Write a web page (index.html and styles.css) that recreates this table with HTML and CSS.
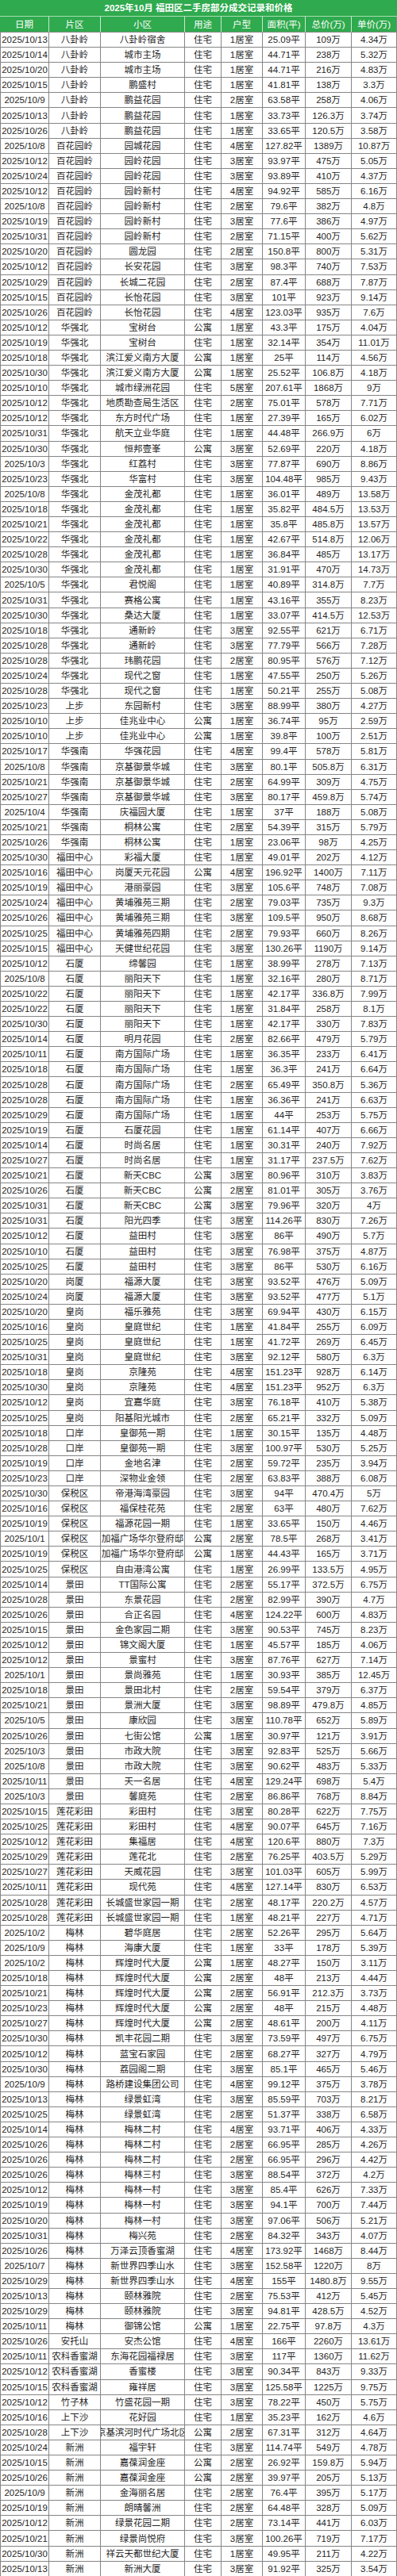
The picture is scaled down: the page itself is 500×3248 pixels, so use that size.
FILE: index.html
```html
<!DOCTYPE html>
<html lang="zh-CN">
<head>
<meta charset="utf-8">
<title>2025年10月 福田区二手房部分成交记录和价格</title>
<link rel="stylesheet" href="styles.css">
</head>
<body>
<table class="sheet">
<colgroup>
<col class="c-date"><col class="c-area"><col class="c-estate"><col class="c-use"><col class="c-type"><col class="c-size"><col class="c-total"><col class="c-unit">
</colgroup>
<thead>
<tr class="title"><th colspan="8">2025年10月 福田区二手房部分成交记录和价格</th></tr>
<tr class="head"><th>日期</th><th>片区</th><th>小区</th><th>用途</th><th>户型</th><th>面积(平)</th><th>总价(万)</th><th>单价(万)</th></tr>
</thead>
<tbody>
<tr><td>2025/10/13</td><td>八卦岭</td><td>八卦岭宿舍</td><td>住宅</td><td>1居室</td><td>25.09平</td><td>109万</td><td>4.34万</td></tr>
<tr><td>2025/10/14</td><td>八卦岭</td><td>城市主场</td><td>住宅</td><td>1居室</td><td>44.71平</td><td>238万</td><td>5.32万</td></tr>
<tr><td>2025/10/20</td><td>八卦岭</td><td>城市主场</td><td>住宅</td><td>1居室</td><td>44.71平</td><td>216万</td><td>4.83万</td></tr>
<tr><td>2025/10/15</td><td>八卦岭</td><td>鹏盛村</td><td>住宅</td><td>1居室</td><td>41.81平</td><td>138万</td><td>3.3万</td></tr>
<tr><td>2025/10/9</td><td>八卦岭</td><td>鹏益花园</td><td>住宅</td><td>2居室</td><td>63.58平</td><td>258万</td><td>4.06万</td></tr>
<tr><td>2025/10/13</td><td>八卦岭</td><td>鹏益花园</td><td>住宅</td><td>1居室</td><td>33.73平</td><td>126.3万</td><td>3.74万</td></tr>
<tr><td>2025/10/26</td><td>八卦岭</td><td>鹏益花园</td><td>住宅</td><td>1居室</td><td>33.65平</td><td>120.5万</td><td>3.58万</td></tr>
<tr><td>2025/10/8</td><td>百花园岭</td><td>园城花园</td><td>住宅</td><td>4居室</td><td>127.82平</td><td>1389万</td><td>10.87万</td></tr>
<tr><td>2025/10/12</td><td>百花园岭</td><td>园岭花园</td><td>住宅</td><td>3居室</td><td>93.97平</td><td>475万</td><td>5.05万</td></tr>
<tr><td>2025/10/24</td><td>百花园岭</td><td>园岭花园</td><td>住宅</td><td>3居室</td><td>93.89平</td><td>410万</td><td>4.37万</td></tr>
<tr><td>2025/10/12</td><td>百花园岭</td><td>园岭新村</td><td>住宅</td><td>4居室</td><td>94.92平</td><td>585万</td><td>6.16万</td></tr>
<tr><td>2025/10/8</td><td>百花园岭</td><td>园岭新村</td><td>住宅</td><td>2居室</td><td>79.6平</td><td>382万</td><td>4.8万</td></tr>
<tr><td>2025/10/19</td><td>百花园岭</td><td>园岭新村</td><td>住宅</td><td>3居室</td><td>77.6平</td><td>386万</td><td>4.97万</td></tr>
<tr><td>2025/10/31</td><td>百花园岭</td><td>园岭新村</td><td>住宅</td><td>2居室</td><td>71.15平</td><td>400万</td><td>5.62万</td></tr>
<tr><td>2025/10/20</td><td>百花园岭</td><td>圆龙园</td><td>住宅</td><td>2居室</td><td>150.8平</td><td>800万</td><td>5.31万</td></tr>
<tr><td>2025/10/12</td><td>百花园岭</td><td>长安花园</td><td>住宅</td><td>3居室</td><td>98.3平</td><td>740万</td><td>7.53万</td></tr>
<tr><td>2025/10/29</td><td>百花园岭</td><td>长城二花园</td><td>住宅</td><td>2居室</td><td>87.4平</td><td>688万</td><td>7.87万</td></tr>
<tr><td>2025/10/15</td><td>百花园岭</td><td>长怡花园</td><td>住宅</td><td>3居室</td><td>101平</td><td>923万</td><td>9.14万</td></tr>
<tr><td>2025/10/26</td><td>百花园岭</td><td>长怡花园</td><td>住宅</td><td>4居室</td><td>123.03平</td><td>935万</td><td>7.6万</td></tr>
<tr><td>2025/10/12</td><td>华强北</td><td>宝树台</td><td>公寓</td><td>1居室</td><td>43.3平</td><td>175万</td><td>4.04万</td></tr>
<tr><td>2025/10/19</td><td>华强北</td><td>宝树台</td><td>住宅</td><td>1居室</td><td>32.14平</td><td>354万</td><td>11.01万</td></tr>
<tr><td>2025/10/18</td><td>华强北</td><td>滨江爱义南方大厦</td><td>公寓</td><td>1居室</td><td>25平</td><td>114万</td><td>4.56万</td></tr>
<tr><td>2025/10/30</td><td>华强北</td><td>滨江爱义南方大厦</td><td>公寓</td><td>1居室</td><td>25.52平</td><td>106.8万</td><td>4.18万</td></tr>
<tr><td>2025/10/10</td><td>华强北</td><td>城市绿洲花园</td><td>住宅</td><td>5居室</td><td>207.61平</td><td>1868万</td><td>9万</td></tr>
<tr><td>2025/10/12</td><td>华强北</td><td>地质勘查局生活区</td><td>住宅</td><td>2居室</td><td>75.01平</td><td>578万</td><td>7.71万</td></tr>
<tr><td>2025/10/12</td><td>华强北</td><td>东方时代广场</td><td>住宅</td><td>1居室</td><td>27.39平</td><td>165万</td><td>6.02万</td></tr>
<tr><td>2025/10/31</td><td>华强北</td><td>航天立业华庭</td><td>住宅</td><td>1居室</td><td>44.48平</td><td>266.9万</td><td>6万</td></tr>
<tr><td>2025/10/30</td><td>华强北</td><td>恒邦壹峯</td><td>公寓</td><td>3居室</td><td>52.69平</td><td>220万</td><td>4.18万</td></tr>
<tr><td>2025/10/3</td><td>华强北</td><td>红荔村</td><td>住宅</td><td>3居室</td><td>77.87平</td><td>690万</td><td>8.86万</td></tr>
<tr><td>2025/10/23</td><td>华强北</td><td>华富村</td><td>住宅</td><td>3居室</td><td>104.48平</td><td>985万</td><td>9.43万</td></tr>
<tr><td>2025/10/8</td><td>华强北</td><td>金茂礼都</td><td>住宅</td><td>1居室</td><td>36.01平</td><td>489万</td><td>13.58万</td></tr>
<tr><td>2025/10/18</td><td>华强北</td><td>金茂礼都</td><td>住宅</td><td>1居室</td><td>35.82平</td><td>484.5万</td><td>13.53万</td></tr>
<tr><td>2025/10/21</td><td>华强北</td><td>金茂礼都</td><td>住宅</td><td>1居室</td><td>35.8平</td><td>485.8万</td><td>13.57万</td></tr>
<tr><td>2025/10/22</td><td>华强北</td><td>金茂礼都</td><td>住宅</td><td>1居室</td><td>42.67平</td><td>514.8万</td><td>12.06万</td></tr>
<tr><td>2025/10/28</td><td>华强北</td><td>金茂礼都</td><td>住宅</td><td>1居室</td><td>36.84平</td><td>485万</td><td>13.17万</td></tr>
<tr><td>2025/10/30</td><td>华强北</td><td>金茂礼都</td><td>住宅</td><td>1居室</td><td>31.91平</td><td>470万</td><td>14.73万</td></tr>
<tr><td>2025/10/5</td><td>华强北</td><td>君悦阁</td><td>住宅</td><td>1居室</td><td>40.89平</td><td>314.8万</td><td>7.7万</td></tr>
<tr><td>2025/10/31</td><td>华强北</td><td>赛格公寓</td><td>住宅</td><td>1居室</td><td>43.16平</td><td>355万</td><td>8.23万</td></tr>
<tr><td>2025/10/30</td><td>华强北</td><td>桑达大厦</td><td>住宅</td><td>1居室</td><td>33.07平</td><td>414.5万</td><td>12.53万</td></tr>
<tr><td>2025/10/18</td><td>华强北</td><td>通新岭</td><td>住宅</td><td>3居室</td><td>92.55平</td><td>621万</td><td>6.71万</td></tr>
<tr><td>2025/10/28</td><td>华强北</td><td>通新岭</td><td>住宅</td><td>3居室</td><td>77.79平</td><td>566万</td><td>7.28万</td></tr>
<tr><td>2025/10/28</td><td>华强北</td><td>玮鹏花园</td><td>住宅</td><td>2居室</td><td>80.95平</td><td>576万</td><td>7.12万</td></tr>
<tr><td>2025/10/24</td><td>华强北</td><td>现代之窗</td><td>住宅</td><td>1居室</td><td>47.55平</td><td>250万</td><td>5.26万</td></tr>
<tr><td>2025/10/28</td><td>华强北</td><td>现代之窗</td><td>住宅</td><td>1居室</td><td>50.21平</td><td>255万</td><td>5.08万</td></tr>
<tr><td>2025/10/23</td><td>上步</td><td>东园新村</td><td>住宅</td><td>3居室</td><td>88.99平</td><td>380万</td><td>4.27万</td></tr>
<tr><td>2025/10/10</td><td>上步</td><td>佳兆业中心</td><td>公寓</td><td>1居室</td><td>36.74平</td><td>95万</td><td>2.59万</td></tr>
<tr><td>2025/10/10</td><td>上步</td><td>佳兆业中心</td><td>公寓</td><td>1居室</td><td>39.8平</td><td>100万</td><td>2.51万</td></tr>
<tr><td>2025/10/17</td><td>华强南</td><td>华强花园</td><td>住宅</td><td>4居室</td><td>99.4平</td><td>578万</td><td>5.81万</td></tr>
<tr><td>2025/10/8</td><td>华强南</td><td>京基御景华城</td><td>住宅</td><td>3居室</td><td>80.1平</td><td>505.8万</td><td>6.31万</td></tr>
<tr><td>2025/10/21</td><td>华强南</td><td>京基御景华城</td><td>住宅</td><td>2居室</td><td>64.99平</td><td>309万</td><td>4.75万</td></tr>
<tr><td>2025/10/27</td><td>华强南</td><td>京基御景华城</td><td>住宅</td><td>3居室</td><td>80.17平</td><td>459.8万</td><td>5.74万</td></tr>
<tr><td>2025/10/4</td><td>华强南</td><td>庆福园大厦</td><td>住宅</td><td>1居室</td><td>37平</td><td>188万</td><td>5.08万</td></tr>
<tr><td>2025/10/21</td><td>华强南</td><td>桐林公寓</td><td>住宅</td><td>2居室</td><td>54.39平</td><td>315万</td><td>5.79万</td></tr>
<tr><td>2025/10/26</td><td>华强南</td><td>桐林公寓</td><td>住宅</td><td>1居室</td><td>23.06平</td><td>98万</td><td>4.25万</td></tr>
<tr><td>2025/10/30</td><td>福田中心</td><td>彩福大厦</td><td>住宅</td><td>1居室</td><td>49.01平</td><td>202万</td><td>4.12万</td></tr>
<tr><td>2025/10/16</td><td>福田中心</td><td>岗厦天元花园</td><td>公寓</td><td>4居室</td><td>196.92平</td><td>1400万</td><td>7.11万</td></tr>
<tr><td>2025/10/19</td><td>福田中心</td><td>港丽豪园</td><td>住宅</td><td>3居室</td><td>105.6平</td><td>748万</td><td>7.08万</td></tr>
<tr><td>2025/10/24</td><td>福田中心</td><td>黄埔雅苑三期</td><td>住宅</td><td>2居室</td><td>79.03平</td><td>735万</td><td>9.3万</td></tr>
<tr><td>2025/10/26</td><td>福田中心</td><td>黄埔雅苑三期</td><td>住宅</td><td>3居室</td><td>109.5平</td><td>950万</td><td>8.68万</td></tr>
<tr><td>2025/10/25</td><td>福田中心</td><td>黄埔雅苑四期</td><td>住宅</td><td>2居室</td><td>79.93平</td><td>660万</td><td>8.26万</td></tr>
<tr><td>2025/10/15</td><td>福田中心</td><td>天健世纪花园</td><td>住宅</td><td>3居室</td><td>130.26平</td><td>1190万</td><td>9.14万</td></tr>
<tr><td>2025/10/12</td><td>石厦</td><td>缔馨园</td><td>住宅</td><td>1居室</td><td>38.99平</td><td>278万</td><td>7.13万</td></tr>
<tr><td>2025/10/8</td><td>石厦</td><td>丽阳天下</td><td>住宅</td><td>1居室</td><td>32.16平</td><td>280万</td><td>8.71万</td></tr>
<tr><td>2025/10/22</td><td>石厦</td><td>丽阳天下</td><td>住宅</td><td>1居室</td><td>42.17平</td><td>336.8万</td><td>7.99万</td></tr>
<tr><td>2025/10/22</td><td>石厦</td><td>丽阳天下</td><td>住宅</td><td>1居室</td><td>31.84平</td><td>258万</td><td>8.1万</td></tr>
<tr><td>2025/10/30</td><td>石厦</td><td>丽阳天下</td><td>住宅</td><td>1居室</td><td>42.17平</td><td>330万</td><td>7.83万</td></tr>
<tr><td>2025/10/14</td><td>石厦</td><td>明月花园</td><td>住宅</td><td>2居室</td><td>82.66平</td><td>479万</td><td>5.79万</td></tr>
<tr><td>2025/10/11</td><td>石厦</td><td>南方国际广场</td><td>住宅</td><td>1居室</td><td>36.35平</td><td>233万</td><td>6.41万</td></tr>
<tr><td>2025/10/18</td><td>石厦</td><td>南方国际广场</td><td>住宅</td><td>1居室</td><td>36.3平</td><td>241万</td><td>6.64万</td></tr>
<tr><td>2025/10/28</td><td>石厦</td><td>南方国际广场</td><td>住宅</td><td>2居室</td><td>65.49平</td><td>350.8万</td><td>5.36万</td></tr>
<tr><td>2025/10/28</td><td>石厦</td><td>南方国际广场</td><td>住宅</td><td>1居室</td><td>36.36平</td><td>241万</td><td>6.63万</td></tr>
<tr><td>2025/10/29</td><td>石厦</td><td>南方国际广场</td><td>住宅</td><td>1居室</td><td>44平</td><td>253万</td><td>5.75万</td></tr>
<tr><td>2025/10/19</td><td>石厦</td><td>石厦花园</td><td>住宅</td><td>1居室</td><td>61.14平</td><td>407万</td><td>6.66万</td></tr>
<tr><td>2025/10/14</td><td>石厦</td><td>时尚名居</td><td>住宅</td><td>1居室</td><td>30.31平</td><td>240万</td><td>7.92万</td></tr>
<tr><td>2025/10/27</td><td>石厦</td><td>时尚名居</td><td>住宅</td><td>1居室</td><td>31.17平</td><td>237.5万</td><td>7.62万</td></tr>
<tr><td>2025/10/21</td><td>石厦</td><td>新天CBC</td><td>公寓</td><td>3居室</td><td>80.96平</td><td>310万</td><td>3.83万</td></tr>
<tr><td>2025/10/26</td><td>石厦</td><td>新天CBC</td><td>公寓</td><td>2居室</td><td>81.01平</td><td>305万</td><td>3.76万</td></tr>
<tr><td>2025/10/31</td><td>石厦</td><td>新天CBC</td><td>公寓</td><td>3居室</td><td>79.96平</td><td>320万</td><td>4万</td></tr>
<tr><td>2025/10/31</td><td>石厦</td><td>阳光四季</td><td>住宅</td><td>3居室</td><td>114.26平</td><td>830万</td><td>7.26万</td></tr>
<tr><td>2025/10/12</td><td>石厦</td><td>益田村</td><td>住宅</td><td>3居室</td><td>86平</td><td>490万</td><td>5.7万</td></tr>
<tr><td>2025/10/10</td><td>石厦</td><td>益田村</td><td>住宅</td><td>3居室</td><td>76.98平</td><td>375万</td><td>4.87万</td></tr>
<tr><td>2025/10/25</td><td>石厦</td><td>益田村</td><td>住宅</td><td>3居室</td><td>86平</td><td>530万</td><td>6.16万</td></tr>
<tr><td>2025/10/20</td><td>岗厦</td><td>福源大厦</td><td>住宅</td><td>3居室</td><td>93.52平</td><td>476万</td><td>5.09万</td></tr>
<tr><td>2025/10/24</td><td>岗厦</td><td>福源大厦</td><td>住宅</td><td>3居室</td><td>93.52平</td><td>477万</td><td>5.1万</td></tr>
<tr><td>2025/10/20</td><td>皇岗</td><td>福乐雅苑</td><td>住宅</td><td>3居室</td><td>69.94平</td><td>430万</td><td>6.15万</td></tr>
<tr><td>2025/10/16</td><td>皇岗</td><td>皇庭世纪</td><td>住宅</td><td>1居室</td><td>41.84平</td><td>255万</td><td>6.09万</td></tr>
<tr><td>2025/10/25</td><td>皇岗</td><td>皇庭世纪</td><td>住宅</td><td>1居室</td><td>41.72平</td><td>269万</td><td>6.45万</td></tr>
<tr><td>2025/10/31</td><td>皇岗</td><td>皇庭世纪</td><td>住宅</td><td>3居室</td><td>92.12平</td><td>580万</td><td>6.3万</td></tr>
<tr><td>2025/10/18</td><td>皇岗</td><td>京隆苑</td><td>住宅</td><td>4居室</td><td>151.23平</td><td>928万</td><td>6.14万</td></tr>
<tr><td>2025/10/30</td><td>皇岗</td><td>京隆苑</td><td>住宅</td><td>4居室</td><td>151.23平</td><td>952万</td><td>6.3万</td></tr>
<tr><td>2025/10/12</td><td>皇岗</td><td>宜嘉华庭</td><td>住宅</td><td>3居室</td><td>76.18平</td><td>410万</td><td>5.38万</td></tr>
<tr><td>2025/10/25</td><td>皇岗</td><td>阳基阳光城市</td><td>住宅</td><td>2居室</td><td>65.21平</td><td>332万</td><td>5.09万</td></tr>
<tr><td>2025/10/18</td><td>口岸</td><td>皇御苑一期</td><td>住宅</td><td>1居室</td><td>30.15平</td><td>135万</td><td>4.48万</td></tr>
<tr><td>2025/10/28</td><td>口岸</td><td>皇御苑一期</td><td>住宅</td><td>3居室</td><td>100.97平</td><td>530万</td><td>5.25万</td></tr>
<tr><td>2025/10/19</td><td>口岸</td><td>金地名津</td><td>住宅</td><td>2居室</td><td>59.72平</td><td>235万</td><td>3.94万</td></tr>
<tr><td>2025/10/23</td><td>口岸</td><td>深物业金领</td><td>住宅</td><td>2居室</td><td>63.83平</td><td>388万</td><td>6.08万</td></tr>
<tr><td>2025/10/30</td><td>保税区</td><td>帝港海湾豪园</td><td>住宅</td><td>3居室</td><td>94平</td><td>470.4万</td><td>5万</td></tr>
<tr><td>2025/10/16</td><td>保税区</td><td>福保桂花苑</td><td>住宅</td><td>2居室</td><td>63平</td><td>480万</td><td>7.62万</td></tr>
<tr><td>2025/10/19</td><td>保税区</td><td>福源花园一期</td><td>住宅</td><td>1居室</td><td>33.65平</td><td>150万</td><td>4.46万</td></tr>
<tr><td>2025/10/1</td><td>保税区</td><td>加福广场华尔登府邸</td><td>公寓</td><td>2居室</td><td>78.5平</td><td>268万</td><td>3.41万</td></tr>
<tr><td>2025/10/19</td><td>保税区</td><td>加福广场华尔登府邸</td><td>公寓</td><td>1居室</td><td>44.43平</td><td>165万</td><td>3.71万</td></tr>
<tr><td>2025/10/25</td><td>保税区</td><td>自由港湾公寓</td><td>住宅</td><td>1居室</td><td>26.99平</td><td>133.5万</td><td>4.95万</td></tr>
<tr><td>2025/10/14</td><td>景田</td><td>TT国际公寓</td><td>住宅</td><td>2居室</td><td>55.17平</td><td>372.5万</td><td>6.75万</td></tr>
<tr><td>2025/10/28</td><td>景田</td><td>东景花园</td><td>住宅</td><td>2居室</td><td>82.99平</td><td>390万</td><td>4.7万</td></tr>
<tr><td>2025/10/26</td><td>景田</td><td>合正名园</td><td>住宅</td><td>4居室</td><td>124.22平</td><td>600万</td><td>4.83万</td></tr>
<tr><td>2025/10/15</td><td>景田</td><td>金色家园二期</td><td>住宅</td><td>3居室</td><td>90.53平</td><td>745万</td><td>8.23万</td></tr>
<tr><td>2025/10/12</td><td>景田</td><td>锦文阁大厦</td><td>住宅</td><td>1居室</td><td>45.57平</td><td>185万</td><td>4.06万</td></tr>
<tr><td>2025/10/12</td><td>景田</td><td>景蜜村</td><td>住宅</td><td>3居室</td><td>87.76平</td><td>627万</td><td>7.14万</td></tr>
<tr><td>2025/10/1</td><td>景田</td><td>景尚雅苑</td><td>住宅</td><td>1居室</td><td>30.93平</td><td>385万</td><td>12.45万</td></tr>
<tr><td>2025/10/18</td><td>景田</td><td>景田北村</td><td>住宅</td><td>2居室</td><td>59.54平</td><td>379万</td><td>6.37万</td></tr>
<tr><td>2025/10/21</td><td>景田</td><td>景洲大厦</td><td>住宅</td><td>3居室</td><td>98.89平</td><td>479.8万</td><td>4.85万</td></tr>
<tr><td>2025/10/5</td><td>景田</td><td>康欣园</td><td>住宅</td><td>3居室</td><td>110.78平</td><td>652万</td><td>5.89万</td></tr>
<tr><td>2025/10/26</td><td>景田</td><td>七街公馆</td><td>公寓</td><td>1居室</td><td>30.97平</td><td>121万</td><td>3.91万</td></tr>
<tr><td>2025/10/3</td><td>景田</td><td>市政大院</td><td>住宅</td><td>3居室</td><td>92.83平</td><td>525万</td><td>5.66万</td></tr>
<tr><td>2025/10/8</td><td>景田</td><td>市政大院</td><td>住宅</td><td>3居室</td><td>90.62平</td><td>483万</td><td>5.33万</td></tr>
<tr><td>2025/10/11</td><td>景田</td><td>天一名居</td><td>住宅</td><td>4居室</td><td>129.24平</td><td>698万</td><td>5.4万</td></tr>
<tr><td>2025/10/3</td><td>景田</td><td>馨庭苑</td><td>住宅</td><td>2居室</td><td>86.86平</td><td>768万</td><td>8.84万</td></tr>
<tr><td>2025/10/15</td><td>莲花彩田</td><td>彩田村</td><td>住宅</td><td>3居室</td><td>80.28平</td><td>622万</td><td>7.75万</td></tr>
<tr><td>2025/10/25</td><td>莲花彩田</td><td>彩田村</td><td>住宅</td><td>4居室</td><td>90.07平</td><td>645万</td><td>7.16万</td></tr>
<tr><td>2025/10/12</td><td>莲花彩田</td><td>集福居</td><td>住宅</td><td>4居室</td><td>120.6平</td><td>880万</td><td>7.3万</td></tr>
<tr><td>2025/10/29</td><td>莲花彩田</td><td>莲花北</td><td>住宅</td><td>2居室</td><td>76.25平</td><td>403.5万</td><td>5.29万</td></tr>
<tr><td>2025/10/27</td><td>莲花彩田</td><td>天威花园</td><td>住宅</td><td>3居室</td><td>101.03平</td><td>605万</td><td>5.99万</td></tr>
<tr><td>2025/10/11</td><td>莲花彩田</td><td>现代苑</td><td>住宅</td><td>4居室</td><td>127.14平</td><td>830万</td><td>6.53万</td></tr>
<tr><td>2025/10/28</td><td>莲花彩田</td><td>长城盛世家园一期</td><td>住宅</td><td>2居室</td><td>48.17平</td><td>220.2万</td><td>4.57万</td></tr>
<tr><td>2025/10/28</td><td>莲花彩田</td><td>长城盛世家园一期</td><td>住宅</td><td>1居室</td><td>48.21平</td><td>227万</td><td>4.71万</td></tr>
<tr><td>2025/10/2</td><td>梅林</td><td>碧华庭居</td><td>住宅</td><td>2居室</td><td>52.26平</td><td>295万</td><td>5.64万</td></tr>
<tr><td>2025/10/9</td><td>梅林</td><td>海康大厦</td><td>住宅</td><td>1居室</td><td>33平</td><td>178万</td><td>5.39万</td></tr>
<tr><td>2025/10/2</td><td>梅林</td><td>辉煌时代大厦</td><td>公寓</td><td>1居室</td><td>48.27平</td><td>150万</td><td>3.11万</td></tr>
<tr><td>2025/10/18</td><td>梅林</td><td>辉煌时代大厦</td><td>公寓</td><td>2居室</td><td>48平</td><td>213万</td><td>4.44万</td></tr>
<tr><td>2025/10/21</td><td>梅林</td><td>辉煌时代大厦</td><td>公寓</td><td>2居室</td><td>56.91平</td><td>212.3万</td><td>3.73万</td></tr>
<tr><td>2025/10/23</td><td>梅林</td><td>辉煌时代大厦</td><td>公寓</td><td>2居室</td><td>48平</td><td>215万</td><td>4.48万</td></tr>
<tr><td>2025/10/27</td><td>梅林</td><td>辉煌时代大厦</td><td>公寓</td><td>2居室</td><td>48.61平</td><td>200万</td><td>4.11万</td></tr>
<tr><td>2025/10/30</td><td>梅林</td><td>凯丰花园二期</td><td>住宅</td><td>3居室</td><td>73.59平</td><td>497万</td><td>6.75万</td></tr>
<tr><td>2025/10/12</td><td>梅林</td><td>蓝宝石家园</td><td>住宅</td><td>2居室</td><td>68.27平</td><td>327万</td><td>4.79万</td></tr>
<tr><td>2025/10/30</td><td>梅林</td><td>荔园阁二期</td><td>住宅</td><td>3居室</td><td>85.1平</td><td>465万</td><td>5.46万</td></tr>
<tr><td>2025/10/9</td><td>梅林</td><td>路桥建设集团公司</td><td>住宅</td><td>4居室</td><td>99.12平</td><td>375万</td><td>3.78万</td></tr>
<tr><td>2025/10/13</td><td>梅林</td><td>绿景虹湾</td><td>住宅</td><td>3居室</td><td>85.59平</td><td>703万</td><td>8.21万</td></tr>
<tr><td>2025/10/25</td><td>梅林</td><td>绿景虹湾</td><td>住宅</td><td>2居室</td><td>51.37平</td><td>338万</td><td>6.58万</td></tr>
<tr><td>2025/10/14</td><td>梅林</td><td>梅林二村</td><td>住宅</td><td>4居室</td><td>93.71平</td><td>406万</td><td>4.33万</td></tr>
<tr><td>2025/10/26</td><td>梅林</td><td>梅林二村</td><td>住宅</td><td>2居室</td><td>66.95平</td><td>285万</td><td>4.26万</td></tr>
<tr><td>2025/10/26</td><td>梅林</td><td>梅林二村</td><td>住宅</td><td>2居室</td><td>66.95平</td><td>296万</td><td>4.42万</td></tr>
<tr><td>2025/10/26</td><td>梅林</td><td>梅林三村</td><td>住宅</td><td>3居室</td><td>88.54平</td><td>372万</td><td>4.2万</td></tr>
<tr><td>2025/10/12</td><td>梅林</td><td>梅林一村</td><td>住宅</td><td>3居室</td><td>85.4平</td><td>626万</td><td>7.33万</td></tr>
<tr><td>2025/10/19</td><td>梅林</td><td>梅林一村</td><td>住宅</td><td>3居室</td><td>94.1平</td><td>700万</td><td>7.44万</td></tr>
<tr><td>2025/10/20</td><td>梅林</td><td>梅林一村</td><td>住宅</td><td>3居室</td><td>97.06平</td><td>506万</td><td>5.21万</td></tr>
<tr><td>2025/10/31</td><td>梅林</td><td>梅兴苑</td><td>住宅</td><td>2居室</td><td>84.32平</td><td>343万</td><td>4.07万</td></tr>
<tr><td>2025/10/26</td><td>梅林</td><td>万泽云顶香蜜湖</td><td>住宅</td><td>4居室</td><td>173.92平</td><td>1468万</td><td>8.44万</td></tr>
<tr><td>2025/10/7</td><td>梅林</td><td>新世界四季山水</td><td>住宅</td><td>3居室</td><td>152.58平</td><td>1220万</td><td>8万</td></tr>
<tr><td>2025/10/29</td><td>梅林</td><td>新世界四季山水</td><td>住宅</td><td>4居室</td><td>155平</td><td>1480.8万</td><td>9.55万</td></tr>
<tr><td>2025/10/13</td><td>梅林</td><td>颐林雅院</td><td>住宅</td><td>2居室</td><td>75.53平</td><td>412万</td><td>5.45万</td></tr>
<tr><td>2025/10/29</td><td>梅林</td><td>颐林雅院</td><td>住宅</td><td>3居室</td><td>94.81平</td><td>428.5万</td><td>4.52万</td></tr>
<tr><td>2025/10/11</td><td>梅林</td><td>御锦公馆</td><td>公寓</td><td>1居室</td><td>22.75平</td><td>97.8万</td><td>4.3万</td></tr>
<tr><td>2025/10/26</td><td>安托山</td><td>安杰公馆</td><td>住宅</td><td>4居室</td><td>166平</td><td>2260万</td><td>13.61万</td></tr>
<tr><td>2025/10/11</td><td>农科香蜜湖</td><td>东海花园福禄居</td><td>住宅</td><td>3居室</td><td>117平</td><td>1360万</td><td>11.62万</td></tr>
<tr><td>2025/10/12</td><td>农科香蜜湖</td><td>香蜜楼</td><td>住宅</td><td>3居室</td><td>90.34平</td><td>843万</td><td>9.33万</td></tr>
<tr><td>2025/10/15</td><td>农科香蜜湖</td><td>雍祥居</td><td>住宅</td><td>3居室</td><td>125.58平</td><td>1225万</td><td>9.75万</td></tr>
<tr><td>2025/10/12</td><td>竹子林</td><td>竹盛花园一期</td><td>住宅</td><td>3居室</td><td>78.22平</td><td>450万</td><td>5.75万</td></tr>
<tr><td>2025/10/16</td><td>上下沙</td><td>花好园</td><td>住宅</td><td>1居室</td><td>35.23平</td><td>162万</td><td>4.6万</td></tr>
<tr><td>2025/10/28</td><td>上下沙</td><td><div class="fit">京基滨河时代广场北区</div></td><td>公寓</td><td>2居室</td><td>67.31平</td><td>312万</td><td>4.64万</td></tr>
<tr><td>2025/10/24</td><td>新洲</td><td>福宇轩</td><td>住宅</td><td>3居室</td><td>114.74平</td><td>549万</td><td>4.78万</td></tr>
<tr><td>2025/10/15</td><td>新洲</td><td>嘉葆润金座</td><td>公寓</td><td>2居室</td><td>26.92平</td><td>159.8万</td><td>5.94万</td></tr>
<tr><td>2025/10/26</td><td>新洲</td><td>嘉葆润金座</td><td>公寓</td><td>2居室</td><td>39.97平</td><td>205万</td><td>5.13万</td></tr>
<tr><td>2025/10/9</td><td>新洲</td><td>金海丽名居</td><td>住宅</td><td>2居室</td><td>76.4平</td><td>395万</td><td>5.17万</td></tr>
<tr><td>2025/10/19</td><td>新洲</td><td>朗晴馨洲</td><td>住宅</td><td>2居室</td><td>64.48平</td><td>328万</td><td>5.09万</td></tr>
<tr><td>2025/10/12</td><td>新洲</td><td>绿景花园二期</td><td>住宅</td><td>2居室</td><td>73.14平</td><td>441万</td><td>6.03万</td></tr>
<tr><td>2025/10/21</td><td>新洲</td><td>绿景尚悦府</td><td>住宅</td><td>3居室</td><td>100.26平</td><td>719万</td><td>7.17万</td></tr>
<tr><td>2025/10/30</td><td>新洲</td><td>祥云天都世纪大厦</td><td>住宅</td><td>1居室</td><td>49.95平</td><td>211万</td><td>4.22万</td></tr>
<tr><td>2025/10/13</td><td>新洲</td><td>新洲大厦</td><td>住宅</td><td>3居室</td><td>91.92平</td><td>325万</td><td>3.54万</td></tr>
</tbody>
</table>
</body>
</html>
```
FILE: styles.css
```css
html, body {
  margin: 0;
  padding: 0;
  background: #ffffff;
}

.sheet {
  width: 500px;
  table-layout: fixed;
  border-collapse: separate;
  border-spacing: 0;
  font-family: "Liberation Sans", "Noto Sans CJK SC", sans-serif;
  font-size: 11.5px;
  color: #262626;
}

.c-date { width: 62px; }
.c-area { width: 65px; }
.c-estate { width: 106px; }
.c-use { width: 46px; }
.c-type { width: 52px; }
.c-size { width: 54px; }
.c-total { width: 58px; }
.c-unit { width: 57px; }

.sheet th,
.sheet td {
  padding: 0;
  text-align: center;
  vertical-align: middle;
  white-space: nowrap;
  overflow: hidden;
  line-height: 14px;
}

.sheet td {
  border-right: 1px solid #858585;
  border-bottom: 1px solid #858585;
}

.sheet td:first-child {
  border-left: 1px solid #858585;
}

.sheet tbody tr {
  height: 19.1px;
}

.title th {
  height: 20px;
  background: #2faa4e;
  color: #ffffff;
  font-weight: bold;
  font-size: 11.5px;
  border-bottom: 1px solid #a8dcb5;
}

.head th {
  height: 19px;
  background: #2faa4e;
  color: #ffffff;
  font-weight: normal;
  border-right: 1px solid #c5e9cf;
  border-bottom: 1px solid #858585;
}

.head th:last-child {
  border-right: 1px solid #858585;
}

.fit {
  display: flex;
  justify-content: center;
  overflow: hidden;
  white-space: nowrap;
}
```
